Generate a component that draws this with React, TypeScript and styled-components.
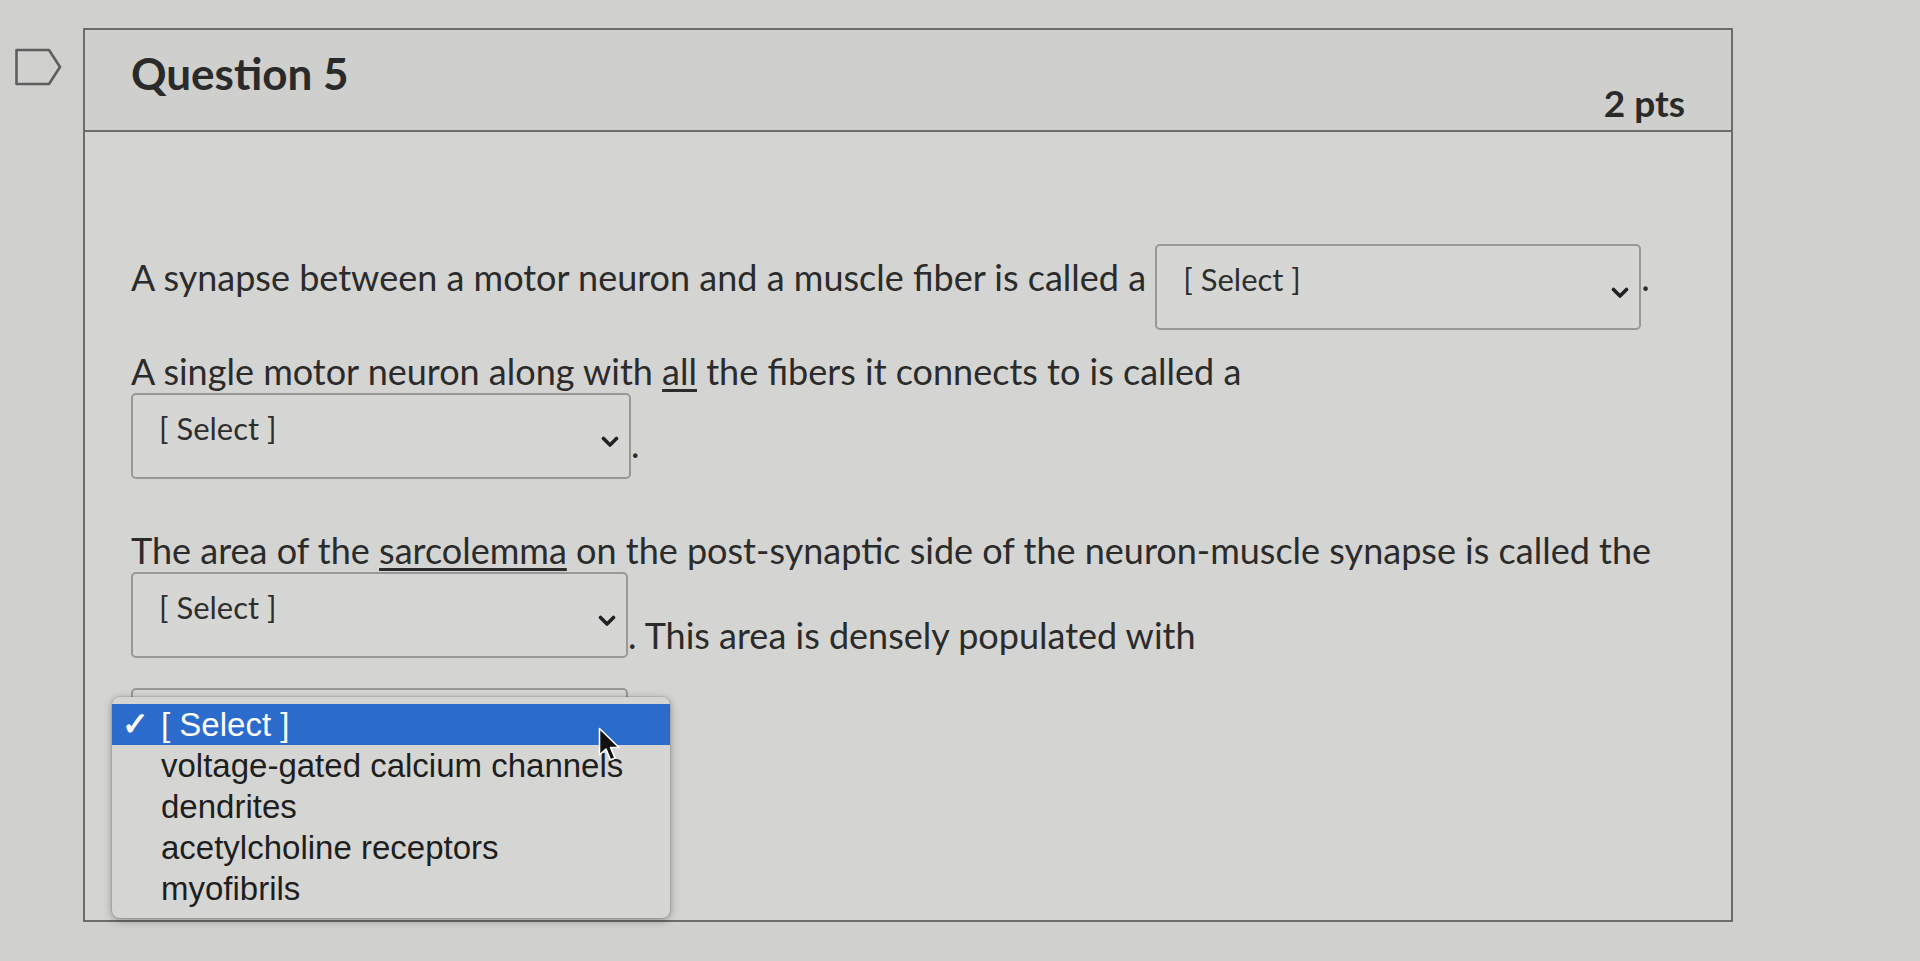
import React from 'react';
import styled, { createGlobalStyle } from 'styled-components';

const GlobalStyle = createGlobalStyle`
  html, body {
    margin: 0;
    padding: 0;
    background: #d0d0ce;
  }
  body {
    font-family: Lato, "Open Sans", sans-serif;
    color: #2b2b2b;
  }
`;

const Page = styled.div`
  display: flex;
  align-items: flex-start;
  padding-top: 28px;
  width: 1920px;
  height: 961px;
  box-sizing: border-box;
  overflow: hidden;
`;

const FlagCol = styled.div`
  width: 83px;
  padding: 19px 0 0 14px;
  box-sizing: border-box;
  flex-shrink: 0;
`;

const Card = styled.div`
  width: 1650px;
  border: 2px solid #6c6c6a;
  background: #d4d4d2;
  box-sizing: border-box;
`;

const Header = styled.div`
  height: 100px;
  display: flex;
  justify-content: space-between;
  border-bottom: 2px solid #6c6c6a;
  background: #cfcfcd;
  padding: 0 46px 0 46px;
`;

const QuestionName = styled.h2`
  margin: 17px 0 0;
  font-size: 44px;
  font-weight: 700;
  line-height: 1.2;
  color: #2a2a2a;
`;

const Points = styled.div`
  align-self: center;
  margin-top: 44px;
  font-size: 37px;
  font-weight: 700;
  color: #2a2a2a;
`;

const Body = styled.div`
  padding: 112px 45px 146px 46px;
  font-size: 36px;
  line-height: 1.2;
`;

const Para = styled.p<{ $gap?: number }>`
  margin: 0 0 ${(p) => p.$gap ?? 20}px;
`;

const U = styled.span`
  text-decoration: underline;
  text-underline-offset: 4px;
`;

const SelectBox = styled.span<{ $width: number; $raise?: number }>`
  display: inline-flex;
  align-items: flex-start;
  width: ${(p) => p.$width}px;
  height: 86px;
  box-sizing: border-box;
  padding: 15px 10px 0 26px;
  border: 2px solid #989896;
  border-radius: 5px;
  background: #d6d6d4;
  font-size: 31px;
  line-height: 1.2;
  vertical-align: ${(p) => p.$raise ?? 0}px;
  color: #2e2e2e;
`;

const SelectLabel = styled.span`
  flex: 1;
`;

const Chevron = styled.svg`
  align-self: center;
  margin-top: -4px;
`;

const DropWrap = styled.span`
  position: relative;
  display: inline-block;
  margin-top: 30px;
`;

const Menu = styled.div`
  position: absolute;
  top: 9px;
  left: -19px;
  width: 558px;
  padding: 7px 0 9px;
  background: #d5d5d3;
  border-radius: 8px;
  box-shadow: 0 2px 8px rgba(0, 0, 0, 0.35), 0 0 0 1px rgba(0, 0, 0, 0.08);
  font-family: "Liberation Sans", Arial, sans-serif;
  font-size: 33px;
  line-height: 41px;
  color: #1e1e1e;
  z-index: 2;
`;

const MenuItem = styled.div<{ $active?: boolean }>`
  display: flex;
  align-items: center;
  height: 41px;
  padding-left: 10px;
  background: ${(p) => (p.$active ? '#2b6bcb' : 'transparent')};
  color: ${(p) => (p.$active ? '#ffffff' : '#1e1e1e')};
`;

const Check = styled.span`
  width: 39px;
  font-size: 32px;
  font-weight: 700;
`;

const Cursor = styled.svg`
  position: absolute;
  left: 486px;
  top: 30px;
`;

const ChevronIcon = () => (
  <Chevron width="18" height="12" viewBox="0 0 18 12">
    <path d="M2.5 2.5 L9 9 L15.5 2.5" fill="none" stroke="#222" strokeWidth="3.6" strokeLinecap="round" strokeLinejoin="round" />
  </Chevron>
);

const Select = ({ width, raise }: { width: number; raise?: number }) => (
  <SelectBox $width={width} $raise={raise}>
    <SelectLabel>[ Select ]</SelectLabel>
    <ChevronIcon />
  </SelectBox>
);

const options = ['voltage-gated calcium channels', 'dendrites', 'acetylcholine receptors', 'myofibrils'];

const App: React.FC = () => {
  return (
    <>
      <GlobalStyle />
      <Page>
        <FlagCol>
          <svg width="48" height="40" viewBox="0 0 48 40">
            <path d="M2.5 3 H35 L46 20 L35 37 H2.5 Z" fill="none" stroke="#5e5e5e" strokeWidth="2.6" strokeLinejoin="round" />
          </svg>
        </FlagCol>
        <Card>
          <Header>
            <QuestionName>Question 5</QuestionName>
            <Points>2 pts</Points>
          </Header>
          <Body>
            <Para>
              A synapse between a motor neuron and a muscle fiber is called a <Select width={486} />.
            </Para>
            <Para $gap={50}>
              A single motor neuron along with <U>all</U> the fibers it connects to is called a{' '}
              <Select width={500} raise={18} />.
            </Para>
            <Para $gap={0}>
              The area of the <U>sarcolemma</U> on the post-synaptic side of the neuron-muscle synapse is called the{' '}
              <Select width={497} raise={30} />. This area is densely populated with{' '}
              <DropWrap>
                <Select width={497} />
                <Menu>
                  <MenuItem $active>
                    <Check>✓</Check>[ Select ]
                  </MenuItem>
                  {options.map((o) => (
                    <MenuItem key={o}>
                      <Check />
                      {o}
                    </MenuItem>
                  ))}
                  <Cursor width="24" height="36" viewBox="0 0 24 36">
                    <path d="M1.5 1.5 L1.5 28 L8 22 L12.5 33 L17 31 L12.5 20.5 L21 20.5 Z" fill="#111" stroke="#fff" strokeWidth="1.6" strokeLinejoin="round" />
                  </Cursor>
                </Menu>
              </DropWrap>
              .
            </Para>
          </Body>
        </Card>
      </Page>
    </>
  );
};

export default App;
